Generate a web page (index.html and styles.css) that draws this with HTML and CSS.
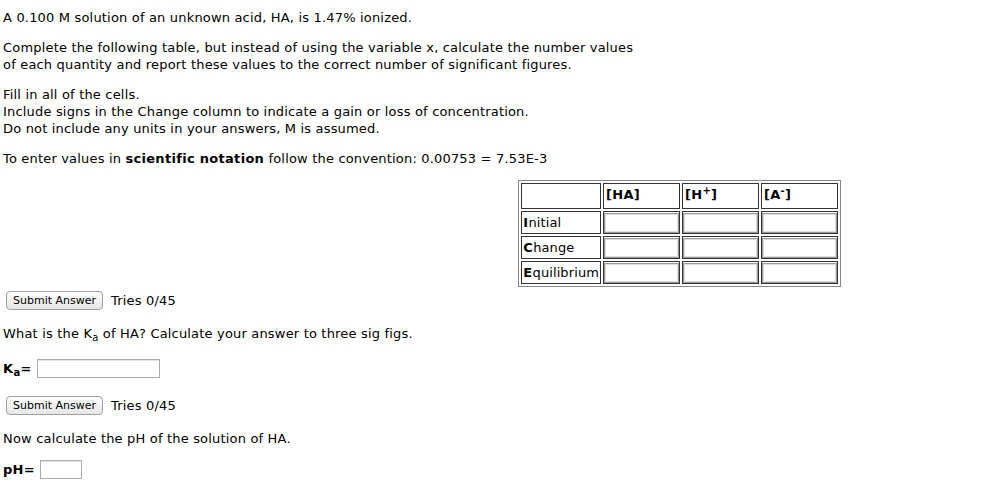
FILE: index.html
```html
<!DOCTYPE html>
<html>
<head>
<meta charset="utf-8">
<link rel="stylesheet" href="styles.css">
</head>
<body>
<div class="page">
  <p>A 0.100 M solution of an unknown acid, HA, is 1.47% ionized.</p>
  <p>Complete the following table, but instead of using the variable x, calculate the number values<br>of each quantity and report these values to the correct number of significant figures.</p>
  <p>Fill in all of the cells.<br>Include signs in the Change column to indicate a gain or loss of concentration.<br>Do not include any units in your answers, M is assumed.</p>
  <p>To enter values in <b>scientific notation</b> follow the convention: 0.00753 = 7.53E-3</p>
  <div class="table-wrap">
    <table class="ice">
      <tr class="head">
        <td class="label"></td>
        <td><b>[HA]</b></td>
        <td><b>[H<sup>+</sup>]</b></td>
        <td><b>[A<sup>-</sup>]</b></td>
      </tr>
      <tr>
        <td class="label"><b>I</b>nitial</td>
        <td><span class="cell-input"></span></td>
        <td><span class="cell-input"></span></td>
        <td><span class="cell-input"></span></td>
      </tr>
      <tr>
        <td class="label"><b>C</b>hange</td>
        <td><span class="cell-input"></span></td>
        <td><span class="cell-input"></span></td>
        <td><span class="cell-input"></span></td>
      </tr>
      <tr>
        <td class="label"><b>E</b>quilibrium</td>
        <td><span class="cell-input"></span></td>
        <td><span class="cell-input"></span></td>
        <td><span class="cell-input"></span></td>
      </tr>
    </table>
  </div>
  <div class="submit-row"><button class="submit">Submit Answer</button><span class="tries">Tries 0/45</span></div>
  <p class="q q1">What is the K<sub>a</sub> of HA? Calculate your answer to three sig figs.</p>
  <div class="answer"><b>K<sub>a</sub>=</b><span class="field ka"></span></div>
  <div class="submit-row second"><button class="submit">Submit Answer</button><span class="tries">Tries 0/45</span></div>
  <p class="q q2">Now calculate the pH of the solution of HA.</p>
  <div class="answer"><b>pH=</b><span class="field ph"></span></div>
</div>
</body>
</html>
```
FILE: styles.css
```css
html, body {
  margin: 0;
  padding: 0;
  background: #fff;
}
body {
  font-family: "DejaVu Sans", Verdana, sans-serif;
  font-size: 13px;
  line-height: 17px;
  letter-spacing: 0.18px;
  color: #000;
}
b {
  letter-spacing: 0.3px;
}
.page {
  padding: 9px 3px 0 3px;
  width: 838px;
}
p {
  margin: 0 0 13px 0;
}
.table-wrap {
  display: flex;
  justify-content: flex-end;
  margin-top: 2px;
}
.ice {
  border: 1px solid #888;
  border-spacing: 2px;
  border-collapse: separate;
  letter-spacing: 0.1px;
}
.ice td {
  border: 1px solid #333;
  padding: 0 1px;
  vertical-align: top;
  height: 20px;
  width: 73px;
}
.ice td.label {
  width: auto;
  vertical-align: middle;
  padding: 0 1px;
}
.ice tr.head td {
  height: 24px;
}
.ice tr.head td b {
  display: block;
  padding: 2px 0 0 1px;
}
sup {
  font-size: 10px;
  line-height: 0;
  vertical-align: 5px;
}
sub {
  font-size: 10px;
  line-height: 0;
  vertical-align: -3px;
}
.cell-input {
  display: block;
  box-sizing: border-box;
  height: 20px;
  margin: 1px -1px 0 -1px;
  border: 1px solid #999;
  box-shadow: inset 0 0 0 1px #ddd;
  background: #fff;
}
.submit-row {
  display: flex;
  align-items: center;
  gap: 8px;
  margin: 3px 0 0 3px;
  height: 20px;
}
.submit-row.second {
  margin-top: 17px;
}
.submit {
  font-family: "DejaVu Sans", Verdana, sans-serif;
  font-size: 11px;
  letter-spacing: 0;
  height: 19px;
  padding: 0 6px;
  border: 1px solid #a0a0a0;
  border-radius: 4px;
  background: linear-gradient(#fdfdfd, #e6e6e6);
  color: #000;
  line-height: 17px;
}
.tries {
  font-size: 13px;
}
.q1 {
  margin-top: 15px;
  margin-bottom: 16px;
}
.q2 {
  margin-top: 15px;
  margin-bottom: 12px;
}
.answer {
  display: flex;
  align-items: center;
  gap: 5px;
  height: 20px;
}
.field {
  display: inline-block;
  box-sizing: border-box;
  height: 19px;
  border: 1px solid #aaa;
  box-shadow: inset 0 1px 0 #e4e4e4;
  background: #fff;
}
.field.ka { width: 123px; }
.field.ph { width: 42px; }
```
